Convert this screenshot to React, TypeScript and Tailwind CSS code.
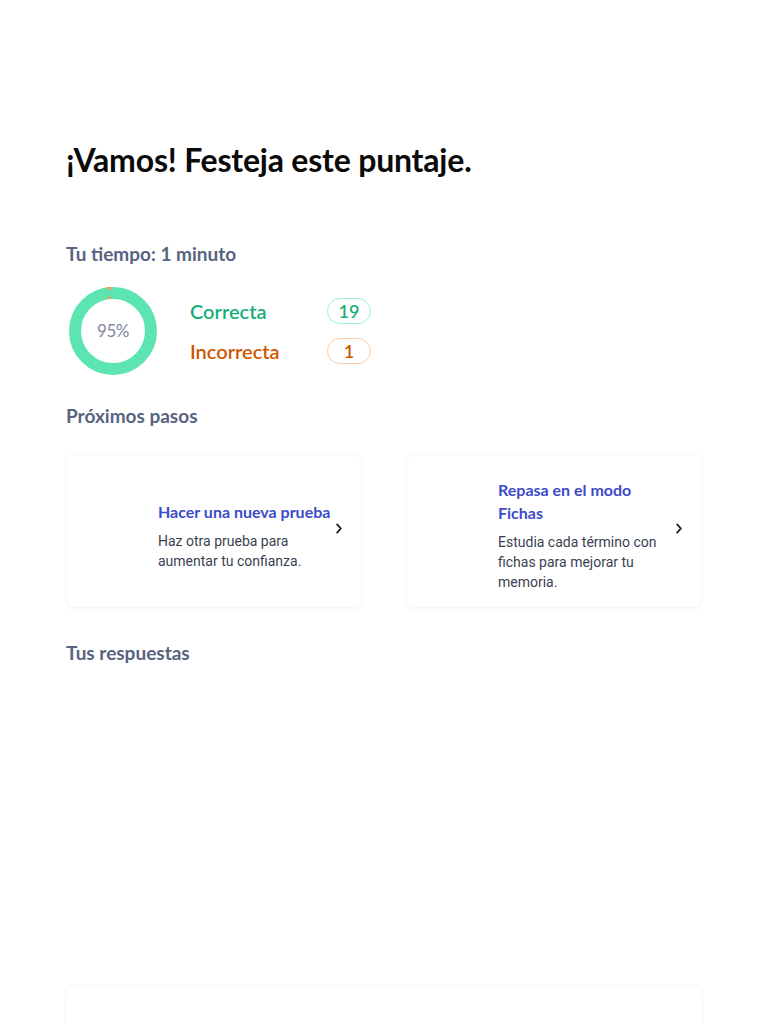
import { ReactNode } from "react";

const heading = "font-['Lato','Noto_Sans',sans-serif]";
const body = "font-['Roboto','Noto_Sans',sans-serif]";

function Donut() {
  return (
    <div className="relative ml-[3px] h-[88px] w-[88px] shrink-0">
      <svg viewBox="0 0 88 88" className="h-full w-full">
        <circle cx="44" cy="44" r="38" fill="none" stroke="#5ce5b1" strokeWidth="12" />
        <polygon points="37.5,0 42.5,0 40,4.5" fill="#ff9c4a" />
        <polygon points="38,12 42,12 40,8" fill="#ff9c4a" />
      </svg>
      <div
        className={`absolute inset-0 flex items-center justify-center text-[17px] tracking-[-0.5px] text-[#8088a0] ${heading}`}
      >
        95%
      </div>
    </div>
  );
}

function Chevron() {
  return (
    <svg viewBox="0 0 8 12" className="mb-[6px] h-[11px] w-[8px] shrink-0">
      <path d="M2 1.5 L6 6 L2 10.5" fill="none" stroke="#1a1d28" strokeWidth="2" strokeLinecap="round" strokeLinejoin="round" />
    </svg>
  );
}

function StepCard({ title, children }: { title: string; children: ReactNode }) {
  return (
    <button
      type="button"
      className="flex h-[152px] items-center rounded-lg bg-white pl-[91px] pr-[18px] text-left shadow-[0_1px_5px_rgba(40,50,80,0.08)]"
    >
      <div className="mt-[8px] w-[176px]">
        <div className={`text-[16px] font-bold leading-[23px] text-[#3c4bc8] ${heading}`}>{title}</div>
        <p className={`mt-2 text-[14px] leading-[20px] text-[#3a3f50] ${body}`}>{children}</p>
      </div>
      <div className="flex-1" />
      <Chevron />
    </button>
  );
}

export default function App() {
  return (
    <div className="min-h-[1024px] bg-white px-[66px] pt-[142px]">
      <h1 className={`text-[32px] font-bold leading-[36px] tracking-[-0.2px] text-[#0a0a0a] ${heading}`}>
        ¡Vamos! Festeja este puntaje.
      </h1>

      <h2 className={`mt-[64px] text-[19px] font-bold leading-[24px] text-[#586380] ${heading}`}>
        Tu tiempo: 1 minuto
      </h2>

      <div className="mt-[21px] flex items-center">
        <Donut />
        <div className="ml-[33px] grid grid-cols-[137px_44px] items-center gap-y-[14px]">
          <span className={`text-[20px] font-semibold leading-[26px] text-[#18ae79] ${heading}`}>Correcta</span>
          <span
            className={`flex h-[26px] items-center justify-center rounded-full border border-[#9ef0d2] text-[18px] font-semibold text-[#18ae79] ${heading}`}
          >
            19
          </span>
          <span className={`text-[20px] font-semibold leading-[26px] text-[#d05700] ${heading}`}>Incorrecta</span>
          <span
            className={`flex h-[26px] items-center justify-center rounded-full border border-[#ffcda3] text-[18px] font-semibold text-[#d05700] ${heading}`}
          >
            1
          </span>
        </div>
      </div>

      <h2 className={`mt-[29px] text-[19px] font-bold leading-[24px] text-[#586380] ${heading}`}>
        Próximos pasos
      </h2>

      <div className="mt-[27px] grid grid-cols-2 gap-[46px] px-px">
        <StepCard title="Hacer una nueva prueba">
          Haz otra prueba para aumentar tu confianza.
        </StepCard>
        <StepCard title="Repasa en el modo Fichas">
          Estudia cada término con fichas para mejorar tu memoria.
        </StepCard>
      </div>

      <h2 className={`mt-[34px] text-[19px] font-bold leading-[24px] text-[#586380] ${heading}`}>
        Tus respuestas
      </h2>

      <div className="mt-[322px] h-[60px] rounded-lg bg-white shadow-[0_-1px_4px_rgba(40,50,80,0.05)]" />
    </div>
  );
}
